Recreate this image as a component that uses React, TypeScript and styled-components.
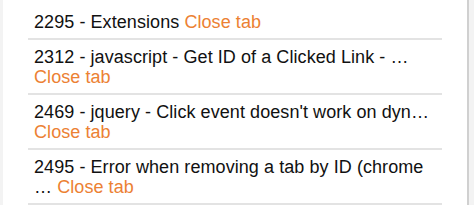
import React from 'react';
import styled, { createGlobalStyle } from 'styled-components';

const tabs = [
    { id: 2295, title: 'Extensions' },
    { id: 2312, title: 'javascript - Get ID of a Clicked Link - …' },
    { id: 2469, title: "jquery - Click event doesn't work on dyn…" },
    { id: 2495, title: 'Error when removing a tab by ID (chrome …' },
];

const GlobalStyle = createGlobalStyle`
    html, body {
        margin: 0;
        padding: 0;
        background: #f3f3f3;
    }
`;

const Window = styled.div`
    display: flex;
    width: 474px;
    height: 205px;
    padding-left: 3px;
    box-sizing: border-box;
    overflow: hidden;
`;

const Panel = styled.div`
    width: 466px;
    background: #ffffff;
    border-right: 2px solid #d0d0d0;
    padding: 5px 0 0 25px;
    box-sizing: border-box;
`;

const TabList = styled.ul`
    list-style: none;
    margin: 0;
    padding: 0;
    width: 414px;
`;

const TabItem = styled.li`
    font-family: "Liberation Sans", Arial, sans-serif;
    font-size: 18px;
    letter-spacing: 0.07px;
    line-height: 20px;
    color: #111111;
    padding: 7px 6px 6px 6px;
    border-bottom: 2px solid #e3e3e3;
`;

const CloseLink = styled.a`
    color: #ec8133;
    text-decoration: none;
`;

export default function App() {
    return (
        <>
            <GlobalStyle />
            <Window>
                <Panel>
                    <TabList>
                        {tabs.map((tab) => (
                            <TabItem key={tab.id}>
                                {tab.id} - {tab.title} <CloseLink href="#">Close tab</CloseLink>
                            </TabItem>
                        ))}
                    </TabList>
                </Panel>
            </Window>
        </>
    );
}
